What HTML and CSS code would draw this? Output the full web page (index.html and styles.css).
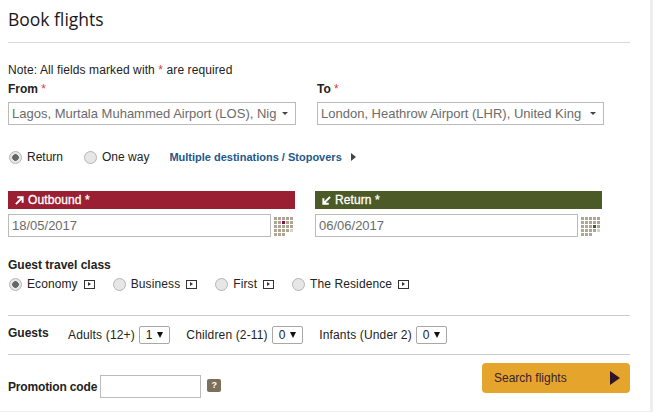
FILE: index.html
```html
<!DOCTYPE html>
<html lang="en">
<head>
    <meta charset="UTF-8">
    <title>Book flights</title>
    <link rel="stylesheet" href="styles.css">
</head>
<body>
    <div class="panel">
        <h1>Book flights</h1>

        <p class="note">Note: All fields marked with <span class="req">*</span> are required</p>

        <div class="two-col places">
            <div class="col">
                <label class="field-label">From <span class="req">*</span></label>
                <div class="combo">
                    <span class="combo-text">Lagos, Murtala Muhammed Airport (LOS), Nig</span>
                    <span class="combo-arrow"></span>
                </div>
            </div>
            <div class="col col-to">
                <label class="field-label">To <span class="req">*</span></label>
                <div class="combo">
                    <span class="combo-text">London, Heathrow Airport (LHR), United King</span>
                    <span class="combo-arrow"></span>
                </div>
            </div>
        </div>

        <div class="trip-type">
            <span class="radio checked"></span><span class="radio-label first-label">Return</span>
            <span class="radio"></span><span class="radio-label second-label">One way</span>
            <a class="multi-link">Multiple destinations / Stopovers</a>
            <span class="small-arrow"></span>
        </div>

        <div class="two-col dates">
            <div class="col">
                <div class="date-bar outbound">
                    <svg class="bar-icon" width="9" height="9" viewBox="0 0 10 10"><path d="M1 9 L8 2 M2.5 1.5 H8.5 V7.5" fill="none" stroke="#fff" stroke-width="2.2"/></svg>
                    Outbound *
                </div>
                <div class="date-row">
                    <div class="date-input">18/05/2017</div>
                    <svg class="cal" width="19" height="19" viewBox="0 0 19 19">
                        <defs>
                            <pattern id="cells" width="4" height="4" patternUnits="userSpaceOnUse"><rect width="3" height="3" fill="#aea595"/></pattern>
                        </defs>
                        <rect width="19" height="19" fill="url(#cells)"/>
                        <rect x="12" y="16" width="7" height="3" fill="#fff"/>
                        <rect x="16" y="12" width="3" height="3" fill="#d8d3ca"/>
                        <rect x="8" y="4" width="3" height="3" fill="#8a1248"/>
                    </svg>
                </div>
            </div>
            <div class="col">
                <div class="date-bar inbound">
                    <svg class="bar-icon" width="9" height="9" viewBox="0 0 10 10"><path d="M9 1 L2 8 M1.5 2.5 V8.5 H7.5" fill="none" stroke="#fff" stroke-width="2.2"/></svg>
                    Return *
                </div>
                <div class="date-row">
                    <div class="date-input">06/06/2017</div>
                    <svg class="cal" width="19" height="19" viewBox="0 0 19 19">
                        <defs>
                            <pattern id="cells2" width="4" height="4" patternUnits="userSpaceOnUse"><rect width="3" height="3" fill="#aea595"/></pattern>
                        </defs>
                        <rect width="19" height="19" fill="url(#cells2)"/>
                        <rect x="12" y="16" width="7" height="3" fill="#fff"/>
                        <rect x="16" y="12" width="3" height="3" fill="#d8d3ca"/>
                        <rect x="12" y="8" width="3" height="3" fill="#4c5a27"/>
                    </svg>
                </div>
            </div>
        </div>

        <h2 class="class-title">Guest travel class</h2>
        <div class="class-row">
            <span class="radio checked"></span><span class="radio-label">Economy</span><span class="info-box"></span>
            <span class="radio"></span><span class="radio-label">Business</span><span class="info-box"></span>
            <span class="radio"></span><span class="radio-label">First</span><span class="info-box"></span>
            <span class="radio"></span><span class="radio-label">The Residence</span><span class="info-box"></span>
        </div>

        <div class="guests">
            <strong class="guests-title">Guests</strong>
            <span class="guest-label">Adults (12+)</span><span class="num-select">1<i></i></span>
            <span class="guest-label">Children (2-11)</span><span class="num-select">0<i></i></span>
            <span class="guest-label">Infants (Under 2)</span><span class="num-select">0<i></i></span>
        </div>

        <div class="bottom">
            <div class="promo">
                <strong>Promotion code</strong>
                <span class="promo-input"></span>
                <span class="help">?</span>
            </div>
            <button class="search">Search flights<span class="search-arrow"></span></button>
        </div>
    </div>
</body>
</html>
```

FILE: styles.css
```css
html, body {
    margin: 0;
    padding: 0;
    height: 412px;
    overflow: hidden;
    background: #eeeeee;
}

body {
    font-family: "Liberation Sans", Arial, sans-serif;
    font-size: 12px;
    color: #222222;
}

.panel {
    width: 622px;
    height: 411px;
    padding: 0 20px 0 8px;
    background: #ffffff;
}

h1 {
    margin: 0;
    padding-top: 8px;
    height: 34px;
    font-family: "Open Sans", sans-serif;
    font-size: 17.5px;
    line-height: 23px;
    font-weight: 400;
    color: #1c1620;
    border-bottom: 1px solid #d9d9d9;
}

.note {
    margin: 20px 0 0;
    line-height: 14px;
    letter-spacing: 0.1px;
}

.req {
    color: #d9402f;
    font-weight: 400;
}

.two-col {
    display: flex;
}

.col {
    width: 288px;
}

.col + .col {
    margin-left: 21px;
}

.col-to {
    width: 287px;
}

.field-label {
    display: block;
    height: 15px;
    line-height: 15px;
    margin-top: 5px;
    font-weight: 700;
}

.combo {
    display: flex;
    align-items: center;
    box-sizing: border-box;
    height: 23px;
    margin-top: 5px;
    padding: 0 7px 0 3px;
    border: 1px solid #bbbbbb;
    font-size: 13px;
    color: #6b6b6b;
}

.combo-text {
    flex: 1;
    overflow: hidden;
    white-space: nowrap;
}

.combo-arrow {
    width: 0;
    height: 0;
    margin-left: 6px;
    border-left: 3px solid transparent;
    border-right: 3px solid transparent;
    border-top: 3px solid #444444;
}

.trip-type {
    display: flex;
    align-items: center;
    height: 14px;
    margin-top: 25px;
}

.radio {
    display: inline-block;
    box-sizing: border-box;
    width: 13px;
    height: 13px;
    margin: 0 5px 0 1px;
    border: 1px solid #b5b5b5;
    border-radius: 50%;
    background: #e6e6e6;
    flex-shrink: 0;
}

.radio.checked {
    background: radial-gradient(circle, #666666 0, #666666 3px, #e6e6e6 3.6px);
}

.first-label {
    margin-right: 20px;
}

.second-label {
    margin-right: 20px;
}

.multi-link {
    font-size: 11px;
    font-weight: 700;
    color: #22588c;
}

.small-arrow {
    width: 0;
    height: 0;
    margin-left: 9px;
    border-top: 4px solid transparent;
    border-bottom: 4px solid transparent;
    border-left: 5px solid #444444;
}

.dates {
    margin-top: 27px;
}

.dates .col + .col {
    margin-left: 19px;
}

.date-bar {
    display: flex;
    align-items: center;
    height: 18px;
    padding-left: 7px;
    width: 280px;
    letter-spacing: 0.1px;
    -webkit-text-stroke: 0.3px #ffffff;
    color: #ffffff;
}

.date-bar.outbound {
    background: #9b1f32;
}

.date-bar.inbound {
    background: #4c5a27;
}

.bar-icon {
    margin-right: 4px;
}

.date-row {
    display: flex;
    margin-top: 5px;
}

.date-input {
    box-sizing: border-box;
    width: 263px;
    height: 23px;
    padding: 0 3px;
    line-height: 21px;
    border: 1px solid #bbbbbb;
    font-size: 13px;
    color: #6b6b6b;
}

.cal {
    margin: 3px 0 0 3px;
}

.class-title {
    margin: 21px 0 0;
    font-size: 12px;
    line-height: 15px;
    font-weight: 700;
}

.class-row {
    display: flex;
    align-items: center;
    height: 16px;
    margin-top: 3px;
}

.class-row .radio-label {
    margin-right: 6px;
    letter-spacing: 0.1px;
}

.info-box {
    position: relative;
    box-sizing: border-box;
    width: 11px;
    height: 9px;
    margin-right: 17px;
    border: 1px solid #333333;
}

.info-box::after {
    content: "";
    position: absolute;
    left: 3px;
    top: 1px;
    border-top: 2px solid transparent;
    border-bottom: 2px solid transparent;
    border-left: 3px solid #333333;
}

.guests {
    display: flex;
    align-items: center;
    height: 38px;
    margin-top: 23px;
    border-top: 1px solid #cccccc;
    border-bottom: 1px solid #cccccc;
}

.guests-title {
    width: 60px;
    margin-top: -4px;
    font-weight: 700;
}

.guest-label {
    margin-right: 4px;
    letter-spacing: 0.15px;
}

.num-select {
    display: flex;
    align-items: center;
    justify-content: space-between;
    box-sizing: border-box;
    width: 31px;
    height: 18px;
    margin-right: 16.5px;
    padding: 0 6px;
    border: 1px solid #a8a8a8;
    border-radius: 2px;
}

.num-select i {
    border-left: 3px solid transparent;
    border-right: 3px solid transparent;
    border-top: 6px solid #111111;
}

.bottom {
    display: flex;
    justify-content: space-between;
    align-items: flex-start;
}

.promo {
    display: flex;
    align-items: center;
    margin-top: 20px;
}

.promo strong {
    font-weight: 700;
    letter-spacing: -0.15px;
}

.promo-input {
    box-sizing: border-box;
    width: 101px;
    height: 23px;
    margin-left: 3px;
    border: 1px solid #bbbbbb;
}

.help {
    width: 14px;
    height: 13px;
    margin: -2px 0 0 6px;
    border-radius: 2px;
    background: #7a705c;
    color: #ffffff;
    font-size: 9px;
    font-weight: 700;
    line-height: 13px;
    text-align: center;
}

.search {
    display: flex;
    align-items: center;
    justify-content: space-between;
    box-sizing: border-box;
    width: 148px;
    height: 30px;
    margin-top: 8px;
    padding: 0 10px 0 12px;
    border: 0;
    border-radius: 4px;
    background: #e5a52d;
    color: #3a2030;
    font-family: inherit;
    font-size: 12px;
}

.search-arrow {
    border-top: 7px solid transparent;
    border-bottom: 7px solid transparent;
    border-left: 10px solid #2e1528;
}
```
